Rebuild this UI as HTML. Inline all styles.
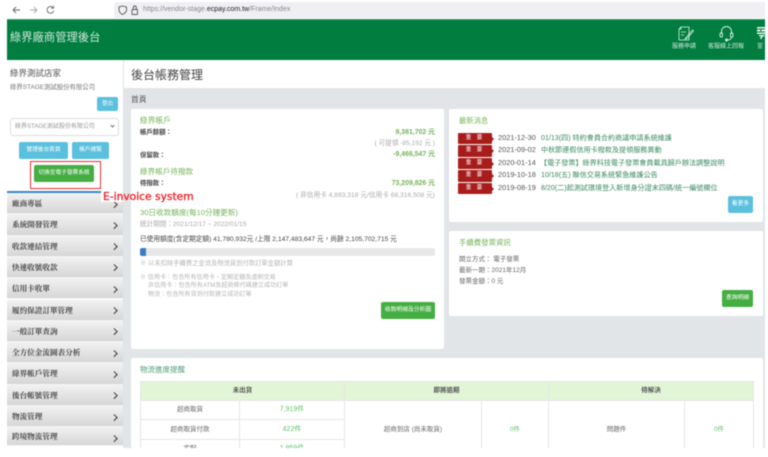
<!DOCTYPE html>
<html lang="zh-Hant"><head><meta charset="utf-8"><title>綠界廠商管理後台</title>
<style>
*{box-sizing:border-box}
html,body{margin:0;padding:0;width:768px;height:457px;overflow:hidden;background:#fff}
#w{position:absolute;left:0;top:0;width:768px;height:457px;overflow:hidden;filter:blur(.5px);font-family:"Liberation Sans","Noto Sans CJK TC",sans-serif;color:#555}
.a{position:absolute}
.t{position:absolute;line-height:12px;white-space:nowrap}
.r{text-align:right}
.g{color:#76b35a}
.card{position:absolute;background:#fff;border-radius:2px}
.btn{position:absolute;color:#fff;text-align:center;border-radius:2px;font-size:6.5px;white-space:nowrap}
.bl{background:#5bc0de}
.gr{background:#45ae43}
.m{position:absolute;left:7px;width:116px;height:21.3px;background:linear-gradient(#f2f2f2,#d6d6d6);font-family:"Liberation Serif","Noto Serif CJK TC",serif;font-weight:700;font-size:7.6px;line-height:21px;color:#444;padding-left:5px;border-bottom:1px solid #f4f4f4}
.m:after{content:"";position:absolute;left:105px;top:8.500px;width:3.500px;height:3.500px;border-top:1.300px solid #333;border-right:1.300px solid #333;transform:rotate(45deg)}
.bd{position:absolute;left:458px;width:34px;height:11.500px;background:#a81c1c;border-radius:1px;color:#fff;font-size:5.5px;line-height:11.500px;text-align:center;letter-spacing:2px}
.bd:after{content:"";position:absolute;left:34px;top:4px;border-left:2px solid #a81c1c;border-top:2px solid transparent;border-bottom:2px solid transparent}
.d{font-size:7.4px;color:#555;left:498px}
.n{font-size:7.1px;color:#3c8a63;left:541px}
.c{position:absolute;border:1px solid #e6e6e6;font-size:6.5px;text-align:center;color:#666;white-space:nowrap;background:#fff}
.h{background:#e2f5d7;font-weight:700;color:#555;font-size:6.5px}
.q{color:#62c26a;font-size:7px}
.amt{font-size:6.9px;font-weight:700}
.lb{font-size:6.4px;font-weight:700;color:#444}
.nt{font-size:6.1px;color:#b5b5b5}
</style></head><body><div id="w">

<!-- browser bar -->
<svg class="a" style="left:10px;top:3px" width="50" height="14" viewBox="0 0 50 14" fill="none" stroke="#666" stroke-width=".9">
<path d="M3 7h7M3 7l3-3M3 7l3 3"/><path d="M20 7h7M27 7l-3-3M27 7l-3 3" stroke="#aaa"/>
<path d="M43 4.500a3.400 3.400 0 1 0 .8 3.200M43.500 2.800v2.400h-2.400"/></svg>
<div class="a" style="left:114px;top:2px;width:651px;height:16px;background:#f0f0f4;border-radius:2px"></div>
<svg class="a" style="left:118px;top:4px" width="22" height="12" viewBox="0 0 22 12" fill="none" stroke="#555" stroke-width=".9">
<path d="M4.500 2l4 1v3c0 2-2 3.500-4 4.500C2.500 9.500 1 8 1 6V3z"/><rect x="14" y="5.500" width="5.500" height="5" rx=".5"/><path d="M15.300 5.500V3.500a1.500 1.500 0 0 1 3 0v2"/></svg>
<div class="t" style="left:143px;top:4px;font-size:7px;color:#888">https://vendor-stage.<span style="color:#222">ecpay.com.tw</span>/Frame/Index</div>

<!-- green header -->
<div class="a" style="left:7px;top:19px;width:758px;height:41px;background:#007d3f;border-top:1px solid #3f9d6c"></div>
<div class="t" style="left:10px;top:32px;font-size:11.3px;color:#cfe8da">綠界廠商管理後台</div>
<svg class="a" style="left:677px;top:25px" width="17" height="17" viewBox="0 0 17 17" fill="none" stroke="#dcefe4" stroke-width=".8"><path d="M4 2h8v13H2V4z"/><path d="M4 2v2H2M4 7h5M4 10h3M15.500 5l-6 7-1.500 2 2.500-1 6-7z"/></svg>
<svg class="a" style="left:718px;top:25px" width="17" height="17" viewBox="0 0 17 17" fill="none" stroke="#dcefe4" stroke-width=".9"><path d="M3.500 9V6.500a5 5 0 0 1 10 0V9"/><rect x="2" y="8" width="2.500" height="4" rx="1"/><rect x="12.500" y="8" width="2.500" height="4" rx="1"/><path d="M13.500 12c0 2-2 3-4 3"/><circle cx="8.500" cy="15" r="1" fill="#dcefe4"/></svg>
<svg class="a" style="left:757px;top:27px" width="8" height="12" viewBox="0 0 8 12" fill="#e8f4ec"><path d="M0 0h8v1.500H0zM0 2.500h3.300v2H0zM4.300 2.500H8v2H4.300zM0 5.500h8V7H0zM2 8h5.500v1.300H5.800L4.500 12H3l1-2.700H2z"/></svg>
<div class="t" style="left:672px;top:41px;font-size:6px;color:#cfe8da">服務申請</div>
<div class="t" style="left:708px;top:41px;font-size:6px;color:#cfe8da">客服線上回報</div>
<div class="t" style="left:757px;top:41px;font-size:6px;color:#cfe8da">宣</div>

<!-- content backdrop -->
<div class="a" style="left:123px;top:60px;width:1px;height:388px;background:#dfe3e6"></div>
<div class="a" style="left:124px;top:88px;width:641px;height:360px;background:#e2e5e8"></div>
<div class="t" style="left:131px;top:69px;font-size:12px;color:#444">後台帳務管理</div>
<div class="t" style="left:131px;top:94px;font-size:7.8px;color:#555">首頁</div>

<!-- sidebar -->
<div class="t" style="left:10px;top:67px;font-size:8.5px;color:#555">綠界測試店家</div>
<div class="t" style="left:10px;top:82px;font-size:6.4px;color:#777">綠界STAGE測試股份有限公司</div>
<div class="btn bl" style="left:97px;top:97px;width:21px;height:14px;line-height:14px;font-size:5.5px">登出</div>
<div class="a" style="left:10px;top:118px;width:109px;height:18px;border:1px solid #ddd;border-radius:3px;background:#fff;font-size:6px;line-height:16px;color:#999;padding-left:4px">綠界STAGE測試股份有限公司<span class="a" style="left:100px;top:5px;width:3px;height:3px;border-right:1px solid #777;border-bottom:1px solid #777;transform:rotate(45deg)"></span></div>
<div class="btn bl" style="left:19px;top:142px;width:49px;height:17px;line-height:17px;font-size:5.7px">管理後台首頁</div>
<div class="btn bl" style="left:72px;top:142px;width:37px;height:17px;line-height:17px;font-size:5.7px">帳戶總覽</div>
<div class="a" style="left:30px;top:161px;width:71px;height:28px;border:1px solid #e8322e"></div>
<div class="btn gr" style="left:34px;top:165px;width:60px;height:17px;line-height:17px;font-size:5.7px">切換至電子發票系統</div>

<div class="a" style="left:7px;top:191px;width:116px;height:2px;background:#3a86c8"></div>
<div class="m" style="top:193px">廠商專區</div>
<div class="m" style="top:214.300px">系統開發管理</div>
<div class="m" style="top:235.600px">收款連結管理</div>
<div class="m" style="top:256.900px">快速收號收款</div>
<div class="m" style="top:278.200px">信用卡收單</div>
<div class="m" style="top:299.500px">履約保證訂單管理</div>
<div class="m" style="top:320.800px">一般訂單查詢</div>
<div class="m" style="top:342.100px">全方位金流圖表分析</div>
<div class="m" style="top:363.400px">綠界帳戶管理</div>
<div class="m" style="top:384.700px">後台帳號管理</div>
<div class="m" style="top:406px">物流管理</div>
<div class="m" style="top:427.300px;height:19px;line-height:19px">跨境物流管理</div>

<!-- account card -->
<div class="card" style="left:131px;top:109px;width:313px;height:240px"></div>
<div class="t g" style="left:140px;top:115px;font-size:7.7px">綠界帳戶</div>
<div class="t lb" style="left:140px;top:127px">帳戶餘額：</div>
<div class="t r g amt" style="right:333px;top:127px">9,381,702 元</div>
<div class="t r" style="right:333px;top:138px;font-size:6.6px;color:#aaa">( 可提領 -85,192 元 )</div>
<div class="t lb" style="left:140px;top:150px">保留款：</div>
<div class="t r g amt" style="right:333px;top:149px">-9,466,547 元</div>
<div class="t g" style="left:140px;top:166px;font-size:7.6px">綠界帳戶待撥款</div>
<div class="t lb" style="left:140px;top:178px">待撥款：</div>
<div class="t r g amt" style="right:333px;top:178px">73,209,826 元</div>
<div class="t r" style="right:333px;top:190px;font-size:6.7px;color:#aaa">( 非信用卡 4,893,318 元/信用卡 68,316,508 元)</div>
<div class="t g" style="left:140px;top:207px;font-size:7.6px">30日收款額度(每10分鐘更新)</div>
<div class="t" style="left:140px;top:219px;font-size:6.6px;color:#aaa">統計期間：2021/12/17 ~ 2022/01/15</div>
<div class="t" style="left:140px;top:234px;font-size:6.7px;color:#444">已使用額度(含定期定額) 41,780,932元 /上限 2,147,483,647 元，尚餘 2,105,702,715 元</div>
<div class="a" style="left:140px;top:248px;width:295px;height:8px;background:#e8e8e8;border-radius:2px"></div>
<div class="a" style="left:140px;top:248px;width:6px;height:8px;background:#3a7fc4;border-radius:2px 0 0 2px"></div>
<div class="t nt" style="left:140px;top:258px;font-size:6.3px">※ 以未扣除手續費之金流及物流貨到付款訂單金額計算</div>
<div class="t nt" style="left:140px;top:272px">※ 信用卡：包含所有信用卡、定期定額及虛刷交易</div>
<div class="t nt" style="left:148px;top:280px">非信用卡：包含所有ATM及超商條代碼建立成功訂單</div>
<div class="t nt" style="left:148px;top:289px">物流：包含所有貨到付款建立成功訂單</div>
<div class="btn gr" style="left:381px;top:302px;width:54px;height:17px;line-height:17px;font-size:5.8px">收款明細及分析圖</div>

<!-- news card -->
<div class="card" style="left:449px;top:109px;width:314px;height:113px"></div>
<div class="t g" style="left:459px;top:115px;font-size:7.3px">最新消息</div>
<div class="bd" style="top:132.500px">重 要</div>
<div class="bd" style="top:145px">重 要</div>
<div class="bd" style="top:157.500px">重 要</div>
<div class="bd" style="top:170px">重 要</div>
<div class="bd" style="top:182.500px">重 要</div>
<div class="t d" style="top:132px">2021-12-30</div><div class="t n" style="top:132px">01/13(四) 特約會員合約商議申請系統維護</div>
<div class="t d" style="top:144px">2021-09-02</div><div class="t n" style="top:144px">中秋節連假信用卡撥款及提領服務異動</div>
<div class="t d" style="top:157px">2020-01-14</div><div class="t n" style="top:157px;left:540px">【電子發票】綠界科技電子發票會員載具歸戶辦法調整說明</div>
<div class="t d" style="top:169px">2019-10-18</div><div class="t n" style="top:169px">10/18(五) 聯信交易系統緊急維護公告</div>
<div class="t d" style="top:182px">2019-08-19</div><div class="t n" style="top:182px">8/20(二)起測試環境登入新增身分證末四碼/統一編號欄位</div>
<div class="btn bl" style="left:728px;top:196px;width:25px;height:17px;line-height:17px;font-size:5.8px">看更多</div>

<!-- fee card -->
<div class="card" style="left:449px;top:231px;width:314px;height:85px"></div>
<div class="t g" style="left:459px;top:237px;font-size:7.4px">手續費發票資訊</div>
<div class="t" style="left:459px;top:254px;font-size:6.5px;color:#666">開立方式： 電子發票</div>
<div class="t" style="left:459px;top:265px;font-size:6.5px;color:#666">最新一期：2021年12月</div>
<div class="t" style="left:459px;top:276px;font-size:6.5px;color:#666">發票金額：0 元</div>
<div class="btn gr" style="left:722px;top:290px;width:31px;height:17px;line-height:17px;font-size:5.8px">查詢明細</div>

<!-- logistics card -->
<div class="card" style="left:131px;top:358px;width:632px;height:90px"></div>
<div class="t" style="left:140px;top:364px;font-size:7.5px;color:#4f9a78">物流進度提醒</div>
<div class="a" style="left:0;top:381px;width:768px;height:67px;overflow:hidden">
<div class="c h" style="left:140px;top:0;width:205px;height:20px;line-height:18px">未出貨</div>
<div class="c h" style="left:344px;top:0;width:205px;height:20px;line-height:18px">即將逾期</div>
<div class="c h" style="left:548px;top:0;width:206px;height:20px;line-height:18px">待解決</div>
<div class="c" style="left:140px;top:19px;width:100px;height:20px;line-height:18px">超商取貨</div>
<div class="c q" style="left:239px;top:19px;width:106px;height:20px;line-height:18px">7,919件</div>
<div class="c" style="left:140px;top:38px;width:100px;height:21px;line-height:19px">超商取貨付款</div>
<div class="c q" style="left:239px;top:38px;width:106px;height:21px;line-height:19px">422件</div>
<div class="c" style="left:140px;top:58px;width:100px;height:20px;line-height:18px">宅配</div>
<div class="c q" style="left:239px;top:58px;width:106px;height:20px;line-height:18px">1,959件</div>
<div class="c" style="left:344px;top:19px;width:138px;height:60px;line-height:58px">超商到店 (尚未取貨)</div>
<div class="c q" style="left:481px;top:19px;width:68px;height:60px;line-height:58px;font-size:6.5px">0件</div>
<div class="c" style="left:548px;top:19px;width:137px;height:60px;line-height:58px">問題件</div>
<div class="c q" style="left:684px;top:19px;width:70px;height:60px;line-height:58px;font-size:6.5px">0件</div>
</div>

<!-- annotation -->
<div class="a" style="left:101px;top:190px;width:22px;height:12px;background:#fff"></div>
<div class="t" style="left:103px;top:190.500px;font-family:'DejaVu Sans',sans-serif;font-size:10.7px;color:#f0141c;-webkit-text-stroke:.25px #f0141c">E-invoice system</div>

</div></body></html>
